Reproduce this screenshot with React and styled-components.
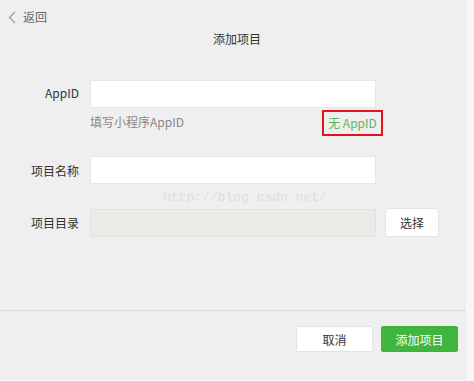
import React from 'react';
import styled, { createGlobalStyle } from 'styled-components';

const GlobalStyle = createGlobalStyle`
  html, body {
    margin: 0;
    padding: 0;
    background: #f7f7f7;
  }
  body {
    font-family: "Noto Sans CJK SC", "Noto Sans", sans-serif;
    font-size: 12px;
    color: #333;
  }
`;

const Panel = styled.div`
  position: relative;
  width: 466px;
  height: 380px;
  background: #efefef;
  display: flex;
  flex-direction: column;
`;

const Header = styled.div`
  padding: 8px 0 0 8px;
  display: flex;
  flex-direction: column;
`;

const BackLink = styled.button`
  display: flex;
  align-items: center;
  gap: 7px;
  border: 0;
  background: transparent;
  padding: 0;
  color: #666;
  font-family: inherit;
  font-size: 12px;
  line-height: 18px;
  cursor: pointer;
`;

const Title = styled.div`
  margin-top: 4px;
  text-align: center;
  font-size: 12px;
  line-height: 18px;
  color: #333;
`;

const Form = styled.div`
  padding-top: 32px;
  display: flex;
  flex-direction: column;
`;

const Row = styled.div`
  display: flex;
  align-items: center;
  margin-top: ${(p) => p.$gap || 0}px;
`;

const Label = styled.div`
  width: 79px;
  margin-right: 11px;
  text-align: right;
  font-size: 12px;
  color: #333;
  align-self: ${(p) => (p.$top ? 'flex-start' : 'center')};
  margin-top: ${(p) => (p.$top ? 4 : 0)}px;
`;

const Input = styled.div`
  width: 286px;
  height: 28px;
  box-sizing: border-box;
  background: ${(p) => (p.$disabled ? '#ebeae6' : '#fff')};
  border: 1px solid ${(p) => (p.$disabled ? '#e2e1dc' : '#e6e6e6')};
  border-radius: 2px;
`;

const Hint = styled.div`
  width: 293px;
  margin-left: 90px;
  height: 27px;
  display: flex;
  align-items: center;
  justify-content: space-between;
  color: #888;
  font-size: 12px;
`;

const NoAppId = styled.span`
  box-sizing: border-box;
  height: 26px;
  width: 61px;
  display: flex;
  align-items: center;
  justify-content: center;
  border: 2px solid #e3151b;
  color: #5cb85c;
  font-size: 12px;
  margin-top: 2px;
`;

const SideButton = styled.button`
  margin-left: 9px;
  width: 54px;
  height: 29px;
  border: 1px solid #e4e4e4;
  background: #fff;
  border-radius: 2px;
  font-family: inherit;
  font-size: 12px;
  color: #333;
`;

const Watermark = styled.div`
  position: absolute;
  left: 163px;
  top: 190px;
  font-family: "Liberation Mono", monospace;
  font-size: 13px;
  color: #dedede;
  pointer-events: none;
`;

const Spacer = styled.div`
  flex: 1;
`;

const Footer = styled.div`
  height: 70px;
  border-top: 1px solid #dadada;
  display: flex;
  justify-content: flex-end;
  align-items: flex-start;
  gap: 8px;
  padding: 15px 8px 0 0;
  box-sizing: border-box;
`;

const FooterButton = styled.button`
  width: 77px;
  height: 26px;
  border-radius: 2px;
  font-family: inherit;
  font-size: 12px;
  border: 1px solid ${(p) => (p.$primary ? '#3cb43c' : '#e2e2e2')};
  background: ${(p) => (p.$primary ? '#40b53f' : '#fff')};
  color: ${(p) => (p.$primary ? '#fff' : '#333')};
`;

const Chevron = () => (
  <svg width="8" height="13" viewBox="0 0 8 13" fill="none">
    <path d="M7 1L1.5 6.5L7 12" stroke="#999" strokeWidth="1.2" />
  </svg>
);

export default function App() {
  return (
    <>
      <GlobalStyle />
      <Panel>
        <Header>
          <BackLink type="button">
            <Chevron />
            返回
          </BackLink>
          <Title>添加项目</Title>
        </Header>

        <Form>
          <Row>
            <Label $top>AppID</Label>
            <Input />
          </Row>
          <Hint>
            <span>填写小程序AppID</span>
            <NoAppId>无 AppID</NoAppId>
          </Hint>
          <Row $gap={21}>
            <Label>项目名称</Label>
            <Input />
          </Row>
          <Row $gap={24}>
            <Label>项目目录</Label>
            <Input $disabled />
            <SideButton type="button">选择</SideButton>
          </Row>
        </Form>

        <Watermark>http://blog.csdn.net/</Watermark>

        <Spacer />

        <Footer>
          <FooterButton type="button">取消</FooterButton>
          <FooterButton type="button" $primary>
            添加项目
          </FooterButton>
        </Footer>
      </Panel>
    </>
  );
}
